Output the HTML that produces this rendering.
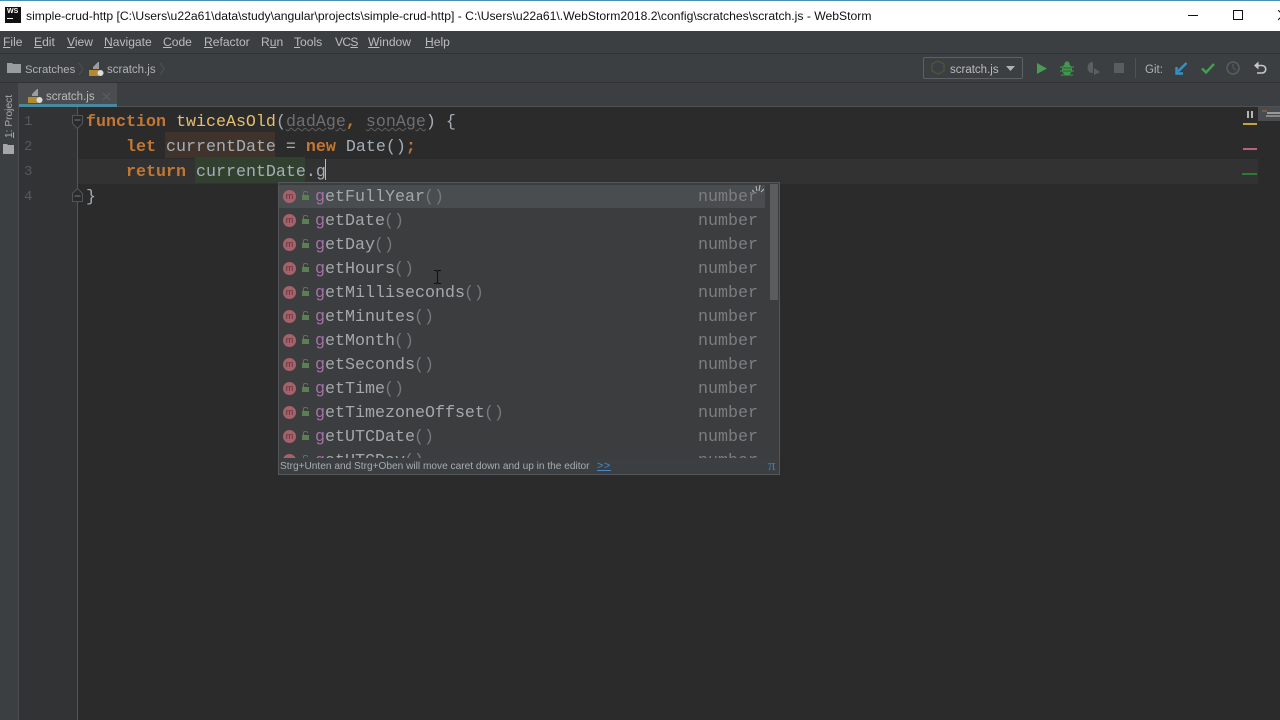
<!DOCTYPE html>
<html><head><meta charset="utf-8"><style>
html,body{margin:0;padding:0;width:1280px;height:720px;overflow:hidden;background:#2b2b2b}
div,span.a,svg.a,svg.lk{position:absolute}
body{font-family:"Liberation Sans",sans-serif;position:relative}
.m{font-family:"Liberation Mono",monospace;font-size:16.67px;line-height:24px;white-space:pre;color:#a4aeb8}
.k{color:#c47733;font-weight:bold}
.ui{font-size:11.5px;color:#bbb;white-space:pre;line-height:16px}
.menu{font-size:12.1px}
.menu u{text-decoration:underline;text-underline-offset:1px}
.ln{color:#565a5d;font-family:"Liberation Mono",monospace;font-size:14px;left:24px;line-height:16px}
.item{width:486px;height:24px}
.ic{top:6px;width:13px;height:13px;border-radius:50%;background:#a8616b;color:#5a3238;font:9px/13px "Liberation Sans",sans-serif;text-align:center;left:4px}
.lk{left:23px;top:7px;width:7px;height:10px}
.nm{left:36px;top:2px;color:#a4a8ac;font-family:"Liberation Mono",monospace;font-size:16.67px;line-height:24px;white-space:pre}
.nm b{color:#a571a8;font-weight:normal}
.nm i{font-style:normal;color:#74787b;margin-left:-1px}
.ty{left:419px;top:2px;color:#7c7e80;font-family:"Liberation Mono",monospace;font-size:16.67px;line-height:24px}
</style></head><body>
<div style="left:0;top:0;width:1280px;height:31px;background:#fff"></div>
<div style="left:0;top:0;width:1280px;height:1px;background:#4a90b8"></div>
<div style="left:5px;top:7px;width:16px;height:16px;background:#111"></div>
<div style="left:7px;top:8px;color:#fff;font:bold 7px/8px 'Liberation Sans',sans-serif">WS</div>
<div style="left:7px;top:18px;width:6px;height:1px;background:#fff"></div>
<div class="ui" style="left:26px;top:8px;color:#111;font-size:12.17px">simple-crud-http [C:\Users\u22a61\data\study\angular\projects\simple-crud-http] - C:\Users\u22a61\.WebStorm2018.2\config\scratches\scratch.js - WebStorm</div>
<div style="left:1188px;top:15px;width:10px;height:1px;background:#111"></div>
<div style="left:1233px;top:10px;width:8px;height:8px;border:1px solid #111"></div>
<svg class="a" style="left:1278px;top:10px" width="2" height="11"><path d="M0 0L6 6M0 10L6 4" stroke="#111" fill="none"/></svg>

<div style="left:0;top:31px;width:1280px;height:22px;background:#3c3f41"></div>
<div style="left:0;top:53px;width:1280px;height:1px;background:#323232"></div>
<div class="ui menu" style="left:3px;top:34px"><u>F</u>ile</div>
<div class="ui menu" style="left:34px;top:34px"><u>E</u>dit</div>
<div class="ui menu" style="left:67px;top:34px"><u>V</u>iew</div>
<div class="ui menu" style="left:104px;top:34px"><u>N</u>avigate</div>
<div class="ui menu" style="left:163px;top:34px"><u>C</u>ode</div>
<div class="ui menu" style="left:204px;top:34px"><u>R</u>efactor</div>
<div class="ui menu" style="left:261px;top:34px">R<u>u</u>n</div>
<div class="ui menu" style="left:294px;top:34px"><u>T</u>ools</div>
<div class="ui menu" style="left:335px;top:34px;letter-spacing:-.7px">VC<u>S</u></div>
<div class="ui menu" style="left:368px;top:34px"><u>W</u>indow</div>
<div class="ui menu" style="left:425px;top:34px"><u>H</u>elp</div>

<div style="left:0;top:54px;width:1280px;height:28px;background:#3c3f41"></div>
<div style="left:0;top:82px;width:1280px;height:1px;background:#323232"></div>
<svg class="a" style="left:7px;top:62px" width="15" height="12"><path d="M0 1H5L6 2H14V11H0Z" fill="#9a9da0"/></svg>
<div class="ui" style="left:25px;top:62px;color:#afb1b3;font-size:11.3px">Scratches</div>
<svg class="a" style="left:78px;top:62px" width="6" height="14"><path d="M1 1L5 7L1 13" stroke="#4e5254" fill="none"/></svg>
<svg class="a" style="left:89px;top:61px" width="15" height="16"><path d="M4 6L9 1H10V8H4Z" fill="#9a9da0"/><rect x="0" y="9" width="10" height="6" fill="#b58a2e"/><circle cx="11.5" cy="12" r="3" fill="#ddd"/></svg>
<div class="ui" style="left:107px;top:62px;color:#afb1b3">scratch.js</div>
<svg class="a" style="left:159px;top:62px" width="6" height="14"><path d="M1 1L5 7L1 13" stroke="#4e5254" fill="none"/></svg>

<div style="left:923px;top:57px;width:98px;height:20px;border:1px solid #5e6163;border-radius:2px"></div>
<svg class="a" style="left:931px;top:60px" width="14" height="15"><path d="M7 1L13 4V11L7 14L1 11V4Z" fill="none" stroke="#46553f" stroke-width="1.5"/></svg>
<div class="ui" style="left:950px;top:62px;color:#bbb">scratch.js</div>
<svg class="a" style="left:1006px;top:66px" width="9" height="5"><path d="M0 0H9L4.500 5Z" fill="#afb1b3"/></svg>
<svg class="a" style="left:1037px;top:63px" width="10" height="11"><path d="M0 0L10 5.500L0 11Z" fill="#499c54"/></svg>
<svg class="a" style="left:1060px;top:61px" width="14" height="15"><ellipse cx="7" cy="8.5" rx="5" ry="5.5" fill="#3f9a4c"/><circle cx="7" cy="3" r="2.6" fill="#3f9a4c"/><path d="M0 6H14M0 10H14M1 14L13 14" stroke="#3f9a4c"/><path d="M3 7H11M3 10H11" stroke="#2e5a35"/></svg>
<svg class="a" style="left:1086px;top:61px" width="15" height="15"><path d="M6 1A4.500 5.500 0 0 0 6 12H7V1Z" fill="#5c5f61"/><path d="M8 7L14 11L8 14Z" fill="#5c5f61"/></svg>
<div style="left:1114px;top:63px;width:10px;height:10px;background:#5a5d5f"></div>
<div style="left:1135px;top:58px;width:1px;height:20px;background:#505254"></div>
<div class="ui" style="left:1145px;top:62px;color:#afb1b3">Git:</div>
<svg class="a" style="left:1175px;top:62px" width="13" height="13"><path d="M11.500 1L3 9.500M1.500 5V11.500H8" stroke="#3592c4" stroke-width="2.400" fill="none"/></svg>
<svg class="a" style="left:1201px;top:63px" width="14" height="11"><path d="M1 5.500L5 9.500L13 1" stroke="#499c54" stroke-width="2.400" fill="none"/></svg>
<svg class="a" style="left:1226px;top:61px" width="14" height="14"><circle cx="7" cy="7" r="6" stroke="#5a5d5f" stroke-width="1.500" fill="none"/><path d="M7 3V7L10 9" stroke="#5a5d5f" fill="none"/></svg>
<svg class="a" style="left:1253px;top:61px" width="14" height="14"><path d="M2.500 4.500H9A3.500 3.500 0 0 1 9 12H4" stroke="#c5c7c9" stroke-width="1.600" fill="none"/><path d="M5.500 0.500L1 4.500L5.500 8.500Z" fill="#c5c7c9"/></svg>

<div style="left:0;top:83px;width:1280px;height:23px;background:#3c3f41"></div>
<div style="left:0;top:106px;width:1280px;height:1px;background:#4e5052"></div>
<div style="left:19px;top:83px;width:98px;height:21px;background:#4a4d4f"></div>
<div style="left:19px;top:104px;width:98px;height:3px;background:#4a88a0"></div>
<svg class="a" style="left:28px;top:88px" width="15" height="16"><path d="M4 6L9 1H10V8H4Z" fill="#9a9da0"/><rect x="0" y="9" width="10" height="6" fill="#b58a2e"/><circle cx="11.500" cy="12" r="3" fill="#ddd"/></svg>
<div class="ui" style="left:46px;top:89px;color:#bbb">scratch.js</div>
<svg class="a" style="left:102px;top:92px" width="9" height="9"><path d="M1 1L8 8M8 1L1 8" stroke="#5c5f61" stroke-width="1.200"/></svg>

<div style="left:0;top:83px;width:19px;height:637px;background:#3c3f41"></div>
<div style="left:18px;top:83px;width:1px;height:637px;background:#4b4d4f"></div>
<div class="ui" style="left:2px;top:138px;transform-origin:0 0;transform:rotate(-90deg);color:#aaa;font-size:10.2px;line-height:15px"><u>1</u>: Project</div>
<svg class="a" style="left:3px;top:144px" width="12" height="11"><path d="M0 0H4L5 1H11V10H0Z" fill="#a4a6a8"/></svg>

<div style="left:19px;top:107px;width:58px;height:613px;background:#313335"></div>
<div style="left:77px;top:107px;width:1px;height:613px;background:#555"></div>
<div style="left:78px;top:107px;width:1202px;height:613px;background:#2b2b2b"></div>
<div style="left:78px;top:159px;width:1180px;height:25px;background:#323232"></div>
<div class="ln" style="top:114px">1</div>
<div class="ln" style="top:139px">2</div>
<div class="ln" style="top:164px">3</div>
<div class="ln" style="top:189px">4</div>
<svg class="a" style="left:72px;top:115px" width="11" height="14"><path d="M0.500 0.500H10.500V8.500L5.500 13.500L0.500 8.500Z" fill="#2b2b2b" stroke="#555"/><path d="M2.500 5H8.500" stroke="#777"/></svg>
<svg class="a" style="left:72px;top:188px" width="11" height="14"><path d="M0.500 13.500H10.500V5.500L5.500 0.500L0.500 5.500Z" fill="#2b2b2b" stroke="#555"/><path d="M2.500 8H8.500" stroke="#777"/></svg>

<div style="left:165px;top:132px;width:110px;height:26px;background:#40332b"></div>
<div style="left:195px;top:157px;width:110px;height:26px;background:#32402f"></div>

<div class="m" style="left:86px;top:111px"><span class="k">function</span> <span style="color:#e8bd6e">twiceAsOld</span>(<span style="color:#6e6f74;text-decoration:underline wavy #606060 1px">dadAge</span><span class="k">,</span> <span style="color:#6e6f74;text-decoration:underline wavy #606060 1px">sonAge</span>) {</div>
<div class="m" style="left:86px;top:136px">    <span class="k">let</span> currentDate = <span class="k">new</span> Date()<span class="k">;</span></div>
<div class="m" style="left:86px;top:161px">    <span class="k">return</span> currentDate.g</div>
<div class="m" style="left:86px;top:186px">}</div>
<div style="left:324.500px;top:159px;width:1.500px;height:21px;background:#bbb"></div>

<div style="left:1247px;top:111px;width:2px;height:7px;background:#b5b6b7"></div>
<div style="left:1251px;top:111px;width:2px;height:7px;background:#b5b6b7"></div>
<div style="left:1243px;top:123px;width:14px;height:2px;background:#c9a13f"></div>
<div style="left:1243px;top:148px;width:14px;height:2px;background:#b8627f"></div>
<div style="left:1242px;top:173px;width:15px;height:2px;background:#2c7a33"></div>
<div style="left:1258px;top:107px;width:22px;height:14px;background:#4a4b4c"></div>
<div style="left:1262px;top:110px;width:5px;height:2px;background:#7a5a48"></div>
<div style="left:1267px;top:112px;width:13px;height:2px;background:#999"></div>
<div style="left:1266px;top:115px;width:14px;height:2px;background:#888"></div>

<div style="left:278px;top:182px;width:500px;height:291px;background:#3b3d3f;border:1px solid #55585a;overflow:hidden">
<div style="left:0;top:0;width:499px;height:275px;overflow:hidden">
<div style="left:0;top:2px;width:486px;height:23px;background:#4a4d4f"></div>
<div class="item" style="left:0;top:1px"><div class="ic">m</div><svg class="lk" viewBox="0 0 7 10"><path d="M1.500 4V2A2 1.800 0 0 1 5.500 2" stroke="#5b7f50" fill="none"/><rect y="4" width="7" height="5" fill="#5b7f50"/></svg><div class="nm"><b>g</b>etFullYear<i>()</i></div><div class="ty">number</div></div>
<div class="item" style="left:0;top:25px"><div class="ic">m</div><svg class="lk" viewBox="0 0 7 10"><path d="M1.500 4V2A2 1.800 0 0 1 5.500 2" stroke="#5b7f50" fill="none"/><rect y="4" width="7" height="5" fill="#5b7f50"/></svg><div class="nm"><b>g</b>etDate<i>()</i></div><div class="ty">number</div></div>
<div class="item" style="left:0;top:49px"><div class="ic">m</div><svg class="lk" viewBox="0 0 7 10"><path d="M1.500 4V2A2 1.800 0 0 1 5.500 2" stroke="#5b7f50" fill="none"/><rect y="4" width="7" height="5" fill="#5b7f50"/></svg><div class="nm"><b>g</b>etDay<i>()</i></div><div class="ty">number</div></div>
<div class="item" style="left:0;top:73px"><div class="ic">m</div><svg class="lk" viewBox="0 0 7 10"><path d="M1.500 4V2A2 1.800 0 0 1 5.500 2" stroke="#5b7f50" fill="none"/><rect y="4" width="7" height="5" fill="#5b7f50"/></svg><div class="nm"><b>g</b>etHours<i>()</i></div><div class="ty">number</div></div>
<div class="item" style="left:0;top:97px"><div class="ic">m</div><svg class="lk" viewBox="0 0 7 10"><path d="M1.500 4V2A2 1.800 0 0 1 5.500 2" stroke="#5b7f50" fill="none"/><rect y="4" width="7" height="5" fill="#5b7f50"/></svg><div class="nm"><b>g</b>etMilliseconds<i>()</i></div><div class="ty">number</div></div>
<div class="item" style="left:0;top:121px"><div class="ic">m</div><svg class="lk" viewBox="0 0 7 10"><path d="M1.500 4V2A2 1.800 0 0 1 5.500 2" stroke="#5b7f50" fill="none"/><rect y="4" width="7" height="5" fill="#5b7f50"/></svg><div class="nm"><b>g</b>etMinutes<i>()</i></div><div class="ty">number</div></div>
<div class="item" style="left:0;top:145px"><div class="ic">m</div><svg class="lk" viewBox="0 0 7 10"><path d="M1.500 4V2A2 1.800 0 0 1 5.500 2" stroke="#5b7f50" fill="none"/><rect y="4" width="7" height="5" fill="#5b7f50"/></svg><div class="nm"><b>g</b>etMonth<i>()</i></div><div class="ty">number</div></div>
<div class="item" style="left:0;top:169px"><div class="ic">m</div><svg class="lk" viewBox="0 0 7 10"><path d="M1.500 4V2A2 1.800 0 0 1 5.500 2" stroke="#5b7f50" fill="none"/><rect y="4" width="7" height="5" fill="#5b7f50"/></svg><div class="nm"><b>g</b>etSeconds<i>()</i></div><div class="ty">number</div></div>
<div class="item" style="left:0;top:193px"><div class="ic">m</div><svg class="lk" viewBox="0 0 7 10"><path d="M1.500 4V2A2 1.800 0 0 1 5.500 2" stroke="#5b7f50" fill="none"/><rect y="4" width="7" height="5" fill="#5b7f50"/></svg><div class="nm"><b>g</b>etTime<i>()</i></div><div class="ty">number</div></div>
<div class="item" style="left:0;top:217px"><div class="ic">m</div><svg class="lk" viewBox="0 0 7 10"><path d="M1.500 4V2A2 1.800 0 0 1 5.500 2" stroke="#5b7f50" fill="none"/><rect y="4" width="7" height="5" fill="#5b7f50"/></svg><div class="nm"><b>g</b>etTimezoneOffset<i>()</i></div><div class="ty">number</div></div>
<div class="item" style="left:0;top:241px"><div class="ic">m</div><svg class="lk" viewBox="0 0 7 10"><path d="M1.500 4V2A2 1.800 0 0 1 5.500 2" stroke="#5b7f50" fill="none"/><rect y="4" width="7" height="5" fill="#5b7f50"/></svg><div class="nm"><b>g</b>etUTCDate<i>()</i></div><div class="ty">number</div></div>
<div class="item" style="left:0;top:265px"><div class="ic">m</div><svg class="lk" viewBox="0 0 7 10"><path d="M1.500 4V2A2 1.800 0 0 1 5.500 2" stroke="#5b7f50" fill="none"/><rect y="4" width="7" height="5" fill="#5b7f50"/></svg><div class="nm"><b>g</b>etUTCDay<i>()</i></div><div class="ty">number</div></div>
</div>
<svg class="a" style="left:473px;top:2px" width="12" height="8"><path d="M2 7L0 5M5 6L4 1M7 6L8 0M9 7L12 4" stroke="#b9bbbd" fill="none"/></svg>
<div style="left:491px;top:1px;width:8px;height:116px;background:#5a5c5e"></div>
<div style="left:0;top:275px;width:499px;height:16px;background:#3c3f41"></div>
<div class="ui" style="left:1px;top:276px;font-size:10.15px;line-height:15px;color:#a9abad">Strg+Unten and Strg+Oben will move caret down and up in the editor</div>
<div class="ui" style="left:318px;top:276px;font-size:11px;line-height:15px;color:#4a88c7;text-decoration:underline;letter-spacing:.5px">&gt;&gt;</div>
<div style="left:489px;top:275px;color:#3d7fa8;font:15px/16px 'Liberation Serif',serif">π</div>
</div>

<svg class="a" style="left:433px;top:270px" width="9" height="14"><path d="M1 0.500H3.500L4.500 1.500L5.500 0.500H8M4.500 1.500V12.500M1 13.500H3.500L4.500 12.500L5.500 13.500H8" stroke="#111" fill="none"/></svg>
</body></html>
